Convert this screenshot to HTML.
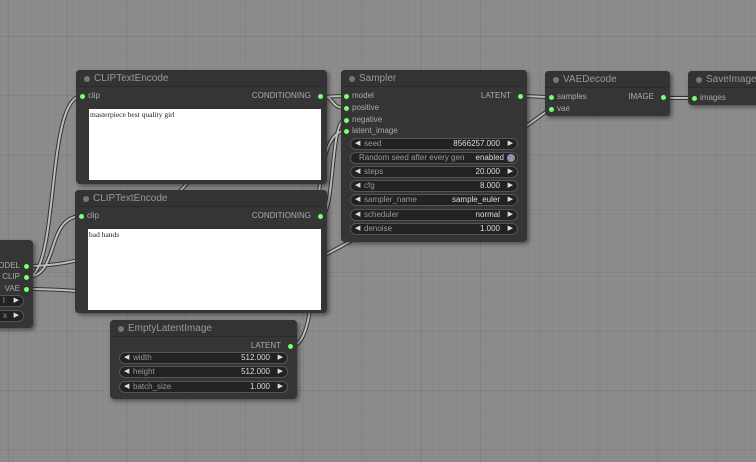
<!DOCTYPE html>
<html><head><meta charset="utf-8"><style>
*{box-sizing:border-box;margin:0;padding:0}
body{width:756px;height:462px;overflow:hidden;position:relative;font-family:"Liberation Sans",sans-serif;font-size:8px;color:#aaa;
background-color:#8c8c8c;
background-image:linear-gradient(90deg,rgba(0,0,0,.06) 1px,transparent 1px),linear-gradient(rgba(0,0,0,.06) 1px,transparent 1px),linear-gradient(90deg,rgba(0,0,0,.025) 1px,transparent 1px),linear-gradient(rgba(0,0,0,.025) 1px,transparent 1px);
background-size:59px 59px,59px 59px,6px 6px,6px 6px;background-position:8px 0,0 36px,0 0,0 0}
.n{position:absolute;background:#353535;border-radius:4px;box-shadow:2px 2px 4px rgba(0,0,0,.45)}
.t{position:absolute;left:0;right:0;top:0;height:17px;background:#333;border-radius:4px 4px 0 0;border-bottom:1px solid #2b2b2b;color:#999;font-size:10px;line-height:17px;padding-left:18px}
.t:before{content:"";position:absolute;left:8px;top:6px;width:6px;height:6px;border-radius:50%;background:#777}
.s{position:absolute;font-size:8px;line-height:10px;color:#aaa}
.d{position:absolute;width:5px;height:5px;border-radius:50%;background:#7f7;}
.ta{position:absolute;background:#fff;font-family:"Liberation Serif",serif;color:#222;font-size:7.5px;padding:1px}
.w{position:absolute;height:12px;border-radius:6px;background:#222;border:1px solid #555;color:#999;font-size:8px;line-height:10px}
.w .l{position:absolute;left:4px;color:#ddd;font-size:7px}
.w .r{position:absolute;right:4px;color:#ddd;font-size:7px}
.w .nm{position:absolute;left:13px}
.w .v{position:absolute;right:17px;color:#ddd}
</style></head><body>
<svg width="756" height="462" style="position:absolute;left:0;top:0">
<g fill="none" stroke-linecap="round">
<g stroke="#333" stroke-width="4">
<path d="M27 277 C60 277 45 96 82 96"/>
<path d="M27 277 C60 277 45 216 82 216"/>
<path d="M27 266 C200 266 180 96 345 96"/>
<path d="M27 289 C200 289 200 363 550 109"/>
<path d="M321 96 C335 96 330 108 345 108"/>
<path d="M321 216 C335 216 330 120 345 120"/>
<path d="M291 346 C330 346 300 131 345 131"/>
<path d="M521 96 C535 96 535 97 550 97"/>
<path d="M664 98 C680 98 680 98 694 98"/>
</g>
<g stroke="#b8c0b8" stroke-width="2">
<path d="M27 277 C60 277 45 96 82 96"/>
<path d="M27 277 C60 277 45 216 82 216"/>
<path d="M27 266 C200 266 180 96 345 96"/>
<path d="M27 289 C200 289 200 363 550 109"/>
<path d="M321 96 C335 96 330 108 345 108"/>
<path d="M321 216 C335 216 330 120 345 120"/>
<path d="M291 346 C330 346 300 131 345 131"/>
<path d="M521 96 C535 96 535 97 550 97"/>
<path d="M664 98 C680 98 680 98 694 98"/>
</g></g></svg>

<div class="n" style="left:-10px;top:240px;width:43px;height:88px">
<div class="s" style="right:13px;top:21px">MODEL</div><div class="d" style="right:4px;top:24px"></div>
<div class="s" style="right:13px;top:32px">CLIP</div><div class="d" style="right:4px;top:35px"></div>
<div class="s" style="right:13px;top:44px">VAE</div><div class="d" style="right:4px;top:47px"></div>
<div class="w" style="left:0;right:9px;top:55px"><span class="nm" style="left:12px">l</span><span class="r">▶</span></div>
<div class="w" style="left:0;right:9px;top:70px"><span class="nm" style="left:12px">x</span><span class="r">▶</span></div>
</div>

<div class="n" style="left:76px;top:70px;width:251px;height:114px">
<div class="t">CLIPTextEncode</div>
<div class="d" style="left:4px;top:24px"></div><div class="s" style="left:12px;top:21px">clip</div>
<div class="s" style="right:16px;top:21px">CONDITIONING</div><div class="d" style="right:4px;top:24px"></div>
<div class="ta" style="left:13px;top:39px;width:232px;height:71px">masterpiece best quality girl</div>
</div>

<div class="n" style="left:75px;top:190px;width:252px;height:123px">
<div class="t">CLIPTextEncode</div>
<div class="d" style="left:4px;top:24px"></div><div class="s" style="left:12px;top:21px">clip</div>
<div class="s" style="right:16px;top:21px">CONDITIONING</div><div class="d" style="right:4px;top:24px"></div>
<div class="ta" style="left:13px;top:39px;width:233px;height:81px">bad hands</div>
</div>

<div class="n" style="left:341px;top:70px;width:186px;height:172px">
<div class="t">Sampler</div>
<div class="d" style="left:3px;top:24px"></div><div class="s" style="left:11px;top:21px">model</div>
<div class="d" style="left:3px;top:36px"></div><div class="s" style="left:11px;top:33px">positive</div>
<div class="d" style="left:3px;top:48px"></div><div class="s" style="left:11px;top:45px">negative</div>
<div class="d" style="left:3px;top:59px"></div><div class="s" style="left:11px;top:56px">latent_image</div>
<div class="s" style="right:16px;top:21px">LATENT</div><div class="d" style="right:4px;top:24px"></div>
<div class="w" style="left:9px;width:168px;top:68px"><span class="l">◀</span><span class="nm">seed</span><span class="v">8566257.000</span><span class="r">▶</span></div>
<div class="w" style="left:9px;width:168px;top:82px"><span class="nm" style="left:8px">Random seed after every gen</span><span class="v" style="right:13px">enabled</span><span style="position:absolute;right:2px;top:1px;width:8px;height:8px;border-radius:50%;background:#8898aa"></span></div>
<div class="w" style="left:9px;width:168px;top:96px"><span class="l">◀</span><span class="nm">steps</span><span class="v">20.000</span><span class="r">▶</span></div>
<div class="w" style="left:9px;width:168px;top:110px"><span class="l">◀</span><span class="nm">cfg</span><span class="v">8.000</span><span class="r">▶</span></div>
<div class="w" style="left:9px;width:168px;top:124px"><span class="l">◀</span><span class="nm">sampler_name</span><span class="v">sample_euler</span><span class="r">▶</span></div>
<div class="w" style="left:9px;width:168px;top:139px"><span class="l">◀</span><span class="nm">scheduler</span><span class="v">normal</span><span class="r">▶</span></div>
<div class="w" style="left:9px;width:168px;top:153px"><span class="l">◀</span><span class="nm">denoise</span><span class="v">1.000</span><span class="r">▶</span></div>
</div>

<div class="n" style="left:545px;top:71px;width:125px;height:45px">
<div class="t">VAEDecode</div>
<div class="d" style="left:4px;top:24px"></div><div class="s" style="left:12px;top:21px">samples</div>
<div class="d" style="left:4px;top:36px"></div><div class="s" style="left:12px;top:33px">vae</div>
<div class="s" style="right:16px;top:21px">IMAGE</div><div class="d" style="right:4px;top:24px"></div>
</div>

<div class="n" style="left:688px;top:71px;width:80px;height:34px">
<div class="t">SaveImage</div>
<div class="d" style="left:4px;top:25px"></div><div class="s" style="left:12px;top:22px">images</div>
</div>

<div class="n" style="left:110px;top:320px;width:187px;height:79px">
<div class="t">EmptyLatentImage</div>
<div class="s" style="right:16px;top:21px">LATENT</div><div class="d" style="right:4px;top:24px"></div>
<div class="w" style="left:9px;width:169px;top:32px"><span class="l">◀</span><span class="nm">width</span><span class="v">512.000</span><span class="r">▶</span></div>
<div class="w" style="left:9px;width:169px;top:46px"><span class="l">◀</span><span class="nm">height</span><span class="v">512.000</span><span class="r">▶</span></div>
<div class="w" style="left:9px;width:169px;top:61px"><span class="l">◀</span><span class="nm">batch_size</span><span class="v">1.000</span><span class="r">▶</span></div>
</div>
</body></html>
